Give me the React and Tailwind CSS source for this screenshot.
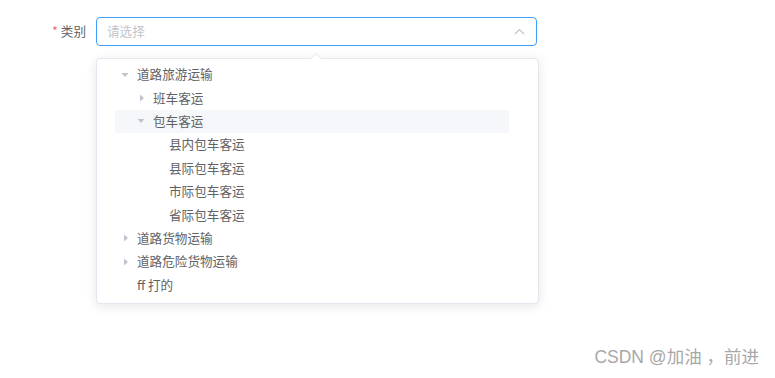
import React from 'react';

const FONT = { fontFamily: '"Microsoft YaHei", "Noto Sans CJK SC", "Noto Sans", sans-serif' };

const rows = [
  { label: '道路旅游运输', level: 0, caret: 'down' },
  { label: '班车客运', level: 1, caret: 'right' },
  { label: '包车客运', level: 1, caret: 'down', active: true },
  { label: '县内包车客运', level: 2 },
  { label: '县际包车客运', level: 2 },
  { label: '市际包车客运', level: 2 },
  { label: '省际包车客运', level: 2 },
  { label: '道路货物运输', level: 0, caret: 'right' },
  { label: '道路危险货物运输', level: 0, caret: 'right' },
  { label: 'ff 打的', level: 0 },
];

const indent = ['pl-0', 'pl-[16px]', 'pl-[32px]'];

function Caret({ dir }) {
  if (!dir) return <span className="w-[22px] shrink-0" />;
  return (
    <span className="w-[22px] shrink-0 flex items-center pl-[6px]">
      {dir === 'down' ? (
        <svg width="8" height="6" viewBox="0 0 8 6">
          <path d="M0.5 1 L7.5 1 L4 5 Z" fill="#c0c4cc" />
        </svg>
      ) : (
        <svg width="6" height="8" viewBox="0 0 6 8" className="ml-[2px]">
          <path d="M1 0.5 L5 4 L1 7.5 Z" fill="#c0c4cc" />
        </svg>
      )}
    </span>
  );
}

export default function App() {
  return (
    <div className="relative w-[775px] h-[378px] bg-white overflow-hidden" style={FONT}>
      <div className="flex pt-[17px]">
        <div className="w-[96px] h-[29px] flex items-center justify-end pr-[10px] text-[12.6px] text-[#606266]">
          <span className="text-[#f56c6c] mr-[3px]">*</span>
          类别
        </div>
        <div className="flex flex-col">
          <div className="w-[441px] h-[29px] border border-[#409eff] rounded-[4px] flex items-center justify-between pl-[10px] pr-[11px]">
            <span className="text-[12.6px] text-[#c0c4cc]">请选择</span>
            <svg width="11" height="7" viewBox="0 0 11 7">
              <path d="M1 6 L5.5 1.5 L10 6" fill="none" stroke="#c0c4cc" strokeWidth="1.2" />
            </svg>
          </div>
          <div className="relative mt-[12px] w-[443px] h-[246px] bg-white border border-[#e4e7ed] rounded-[4px] shadow-[0_2px_12px_rgba(0,0,0,0.1)] pt-[4px] pl-[18px] pr-[29px]">
            <div className="absolute -top-[6px] left-[213px] w-0 h-0 border-x-[6px] border-x-transparent border-b-[6px] border-b-[#e4e7ed]" />
            <div className="absolute -top-[5px] left-[214px] w-0 h-0 border-x-[5px] border-x-transparent border-b-[5px] border-b-white" />
            {rows.map((r) => (
              <div
                key={r.label}
                className={`h-[23.4px] flex items-center text-[12.6px] text-[#606266] ${indent[r.level]} ${r.active ? 'bg-[#f5f7fa]' : ''}`}
              >
                <Caret dir={r.caret} />
                <span>{r.label}</span>
              </div>
            ))}
          </div>
        </div>
      </div>
      <div
        className="absolute right-[16px] bottom-[8px] text-[17.5px] text-[#a8a8a8] whitespace-pre"
        style={{ fontFamily: '"Liberation Sans", "Noto Sans CJK SC", sans-serif' }}
      >
        CSDN @加油 ，前进
      </div>
    </div>
  );
}
